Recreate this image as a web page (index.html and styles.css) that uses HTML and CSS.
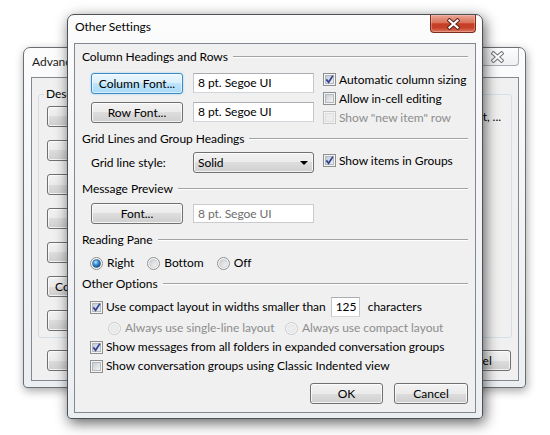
FILE: index.html
```html
<!DOCTYPE html>
<html lang="en">
<head>
<meta charset="utf-8">
<title>Other Settings</title>
<link rel="stylesheet" href="styles.css">
</head>
<body>
<svg class="defs" width="0" height="0" aria-hidden="true">
  <defs>
    <linearGradient id="cbFill" x1="0" y1="0" x2="1" y2="1">
      <stop offset="0" stop-color="#c6cad0"/>
      <stop offset="1" stop-color="#f6f6f6"/>
    </linearGradient>
    <linearGradient id="cbFillOn" x1="0" y1="0" x2="1" y2="1">
      <stop offset="0" stop-color="#c2cad6"/>
      <stop offset="1" stop-color="#eef1f6"/>
    </linearGradient>
    <linearGradient id="rdFill" x1="0" y1="0" x2="1" y2="1">
      <stop offset="0" stop-color="#c9ccd1"/>
      <stop offset="1" stop-color="#f7f7f7"/>
    </linearGradient>
    <radialGradient id="rdDot" cx="0.4" cy="0.35" r="0.7">
      <stop offset="0" stop-color="#b6e6ff"/>
      <stop offset="0.45" stop-color="#3a92d4"/>
      <stop offset="1" stop-color="#0e3f74"/>
    </radialGradient>
  </defs>
</svg>

<main class="desktop">

  <section class="win back">
    <header class="titlebar back-titlebar">
      <span class="title">Advanced View Settings</span>
      <span class="close close-inactive">
        <svg width="13" height="12" viewBox="0 0 13 12">
          <path d="M2.5 2.5L10.5 9.5M10.5 2.5L2.5 9.5" stroke="#6f7378" stroke-width="4.2" stroke-linecap="square"/>
          <path d="M2.5 2.5L10.5 9.5M10.5 2.5L2.5 9.5" stroke="#ffffff" stroke-width="2.2" stroke-linecap="square"/>
        </svg>
      </span>
    </header>
    <div class="client back-client">
      <fieldset class="groupbox">
        <legend>Description</legend>
        <div class="gb-row"><button class="btn gb-btn" aria-label="Columns..."></button><span class="gb-desc gb-desc-long">Sent, ...</span></div>
        <div class="gb-row"><button class="btn gb-btn" aria-label="Group By..."></button></div>
        <div class="gb-row"><button class="btn gb-btn" aria-label="Sort..."></button></div>
        <div class="gb-row"><button class="btn gb-btn" aria-label="Filter..."></button></div>
        <div class="gb-row"><button class="btn gb-btn" aria-label="Other Settings..."></button></div>
        <div class="gb-row"><button class="btn gb-btn gb-btn-text">Conditional Formatting...</button></div>
        <div class="gb-row"><button class="btn gb-btn" aria-label="Format Columns..."></button></div>
      </fieldset>
      <div class="back-footer">
        <button class="btn gb-btn" aria-label="Reset Current View"></button>
        <span class="spacer"></span>
        <button class="btn back-ok" aria-label="OK"></button>
        <button class="btn back-cancel">Cancel</button>
      </div>
    </div>
  </section>

  <section class="win front">
    <header class="titlebar front-titlebar">
      <span class="title">Other Settings</span>
      <span class="close close-active">
        <svg width="13" height="12" viewBox="0 0 13 12">
          <path d="M2.5 2.5L10.5 9.5M10.5 2.5L2.5 9.5" stroke="#5b2418" stroke-width="4.2" stroke-linecap="square"/>
          <path d="M2.5 2.5L10.5 9.5M10.5 2.5L2.5 9.5" stroke="#ffffff" stroke-width="2.2" stroke-linecap="square"/>
        </svg>
      </span>
    </header>

    <div class="client front-client">

      <div class="sec sec1">
        <div class="sec-head"><span>Column Headings and Rows</span></div>
        <div class="sec-body body1">
          <div class="col-btns">
            <button class="btn btn-focus fbtn">Column Font...</button>
            <button class="btn fbtn">Row Font...</button>
          </div>
          <div class="col-fields">
            <span class="tb">8 pt. Segoe UI</span>
            <span class="tb">8 pt. Segoe UI</span>
          </div>
          <div class="col-checks">
            <label class="chk">
              <svg class="box" width="13" height="13" viewBox="0 0 13 13"><rect x="0.5" y="0.5" width="12" height="12" fill="#f4f4f4" stroke="#8e8f8f"/><rect x="2.5" y="2.5" width="8" height="8" fill="url(#cbFillOn)" stroke="#b4b9c0"/><path d="M3.3 6.4L5.6 9.2L9.9 2.6" fill="none" stroke="#2f4190" stroke-width="1.7"/></svg>
              <span>Automatic column sizing</span>
            </label>
            <label class="chk">
              <svg class="box" width="13" height="13" viewBox="0 0 13 13"><rect x="0.5" y="0.5" width="12" height="12" fill="#f4f4f4" stroke="#8e8f8f"/><rect x="2.5" y="2.5" width="8" height="8" fill="url(#cbFill)" stroke="#b4b9c0"/></svg>
              <span>Allow in-cell editing</span>
            </label>
            <label class="chk is-disabled">
              <svg class="box" width="13" height="13" viewBox="0 0 13 13"><rect x="0.5" y="0.5" width="12" height="12" fill="#f4f4f4" stroke="#c7c7c7"/><rect x="2.5" y="2.5" width="8" height="8" fill="#ececec" stroke="#dedede"/></svg>
              <span>Show "new item" row</span>
            </label>
          </div>
        </div>
      </div>

      <div class="sec sec2">
        <div class="sec-head"><span>Grid Lines and Group Headings</span></div>
        <div class="sec-body body2">
          <span class="field-label">Grid line style:</span>
          <span class="sel"><span>Solid</span><svg width="8" height="4" viewBox="0 0 8 4"><path d="M0 0H8L4 4Z" fill="#000"/></svg></span>
          <label class="chk chk-groups">
            <svg class="box" width="13" height="13" viewBox="0 0 13 13"><rect x="0.5" y="0.5" width="12" height="12" fill="#f4f4f4" stroke="#8e8f8f"/><rect x="2.5" y="2.5" width="8" height="8" fill="url(#cbFillOn)" stroke="#b4b9c0"/><path d="M3.3 6.4L5.6 9.2L9.9 2.6" fill="none" stroke="#2f4190" stroke-width="1.7"/></svg>
            <span>Show items in Groups</span>
          </label>
        </div>
      </div>

      <div class="sec sec3">
        <div class="sec-head"><span>Message Preview</span></div>
        <div class="sec-body body3">
          <button class="btn fbtn">Font...</button>
          <span class="tb tb-disabled">8 pt. Segoe UI</span>
        </div>
      </div>

      <div class="sec sec4">
        <div class="sec-head"><span>Reading Pane</span></div>
        <div class="sec-body body4">
          <label class="rad">
            <svg class="dot" width="13" height="13" viewBox="0 0 13 13"><circle cx="6.5" cy="6.5" r="6" fill="#f6f6f6" stroke="#8e8f8f"/><circle cx="6.5" cy="6.5" r="4" fill="url(#rdDot)" stroke="#2b5f91" stroke-width="0.6"/></svg>
            <span>Right</span>
          </label>
          <label class="rad">
            <svg class="dot" width="13" height="13" viewBox="0 0 13 13"><circle cx="6.5" cy="6.5" r="6" fill="#f6f6f6" stroke="#8e8f8f"/><circle cx="6.5" cy="6.5" r="4" fill="url(#rdFill)" stroke="#c0c3c8" stroke-width="0.6"/></svg>
            <span>Bottom</span>
          </label>
          <label class="rad">
            <svg class="dot" width="13" height="13" viewBox="0 0 13 13"><circle cx="6.5" cy="6.5" r="6" fill="#f6f6f6" stroke="#8e8f8f"/><circle cx="6.5" cy="6.5" r="4" fill="url(#rdFill)" stroke="#c0c3c8" stroke-width="0.6"/></svg>
            <span>Off</span>
          </label>
        </div>
      </div>

      <div class="sec sec5">
        <div class="sec-head"><span>Other Options</span></div>
        <div class="sec-body body5">
          <div class="opt-row compact-row">
            <label class="chk">
              <svg class="box" width="13" height="13" viewBox="0 0 13 13"><rect x="0.5" y="0.5" width="12" height="12" fill="#f4f4f4" stroke="#8e8f8f"/><rect x="2.5" y="2.5" width="8" height="8" fill="url(#cbFillOn)" stroke="#b4b9c0"/><path d="M3.3 6.4L5.6 9.2L9.9 2.6" fill="none" stroke="#2f4190" stroke-width="1.7"/></svg>
              <span>Use compact layout in widths smaller than</span>
            </label>
            <span class="tb tb-num">125</span>
            <span class="unit">characters</span>
          </div>
          <div class="opt-row sub-row">
            <label class="rad is-disabled">
              <svg class="dot" width="13" height="13" viewBox="0 0 13 13"><circle cx="6.5" cy="6.5" r="6" fill="#f7f7f7" stroke="#c9c9c9"/><circle cx="6.5" cy="6.5" r="4" fill="#ececec" stroke="#dcdcdc" stroke-width="0.6"/></svg>
              <span>Always use single-line layout</span>
            </label>
            <label class="rad is-disabled">
              <svg class="dot" width="13" height="13" viewBox="0 0 13 13"><circle cx="6.5" cy="6.5" r="6" fill="#f7f7f7" stroke="#c9c9c9"/><circle cx="6.5" cy="6.5" r="4" fill="#ececec" stroke="#dcdcdc" stroke-width="0.6"/></svg>
              <span>Always use compact layout</span>
            </label>
          </div>
          <div class="opt-row">
            <label class="chk">
              <svg class="box" width="13" height="13" viewBox="0 0 13 13"><rect x="0.5" y="0.5" width="12" height="12" fill="#f4f4f4" stroke="#8e8f8f"/><rect x="2.5" y="2.5" width="8" height="8" fill="url(#cbFillOn)" stroke="#b4b9c0"/><path d="M3.3 6.4L5.6 9.2L9.9 2.6" fill="none" stroke="#2f4190" stroke-width="1.7"/></svg>
              <span>Show messages from all folders in expanded conversation groups</span>
            </label>
          </div>
          <div class="opt-row">
            <label class="chk">
              <svg class="box" width="13" height="13" viewBox="0 0 13 13"><rect x="0.5" y="0.5" width="12" height="12" fill="#f4f4f4" stroke="#8e8f8f"/><rect x="2.5" y="2.5" width="8" height="8" fill="url(#cbFill)" stroke="#b4b9c0"/></svg>
              <span>Show conversation groups using Classic Indented view</span>
            </label>
          </div>
        </div>
      </div>

      <div class="footer">
        <button class="btn ok-btn">OK</button>
        <button class="btn cancel-btn">Cancel</button>
      </div>
    </div>
  </section>

</main>
</body>
</html>
```

FILE: styles.css
```css
* { box-sizing: border-box; }
html, body { margin: 0; padding: 0; }
body {
  width: 550px;
  height: 435px;
  overflow: hidden;
  background: #ffffff;
  color: #000;
  font-family: Lato, "Noto Sans", "DejaVu Sans", sans-serif;
  font-size: 12px;
  line-height: 16px;
  letter-spacing: -0.04px;
}
.defs { position: absolute; width: 0; height: 0; }
.desktop { position: relative; width: 550px; height: 435px; }

/* ---------- windows ---------- */
.win {
  position: absolute;
  display: flex;
  flex-direction: column;
  border: 1px solid #4d5054;
  border-radius: 7px 7px 4px 4px;
  background: linear-gradient(#fcfcfd, #f1f3f5 50%, #eceff2);
}
.back {
  left: 23px;
  top: 47px;
  width: 503px;
  height: 341px;
  border-color: #6b6e72;
  box-shadow: 1px 3px 10px rgba(0, 0, 0, 0.35);
}
.front {
  left: 67px;
  top: 14px;
  width: 416px;
  height: 405px;
  box-shadow: 2px 4px 14px rgba(0, 0, 0, 0.62);
}

.titlebar {
  display: flex;
  align-items: flex-start;
  flex: none;
  padding-left: 7px;
}
.front-titlebar { height: 28px; }
.back-titlebar { height: 29px; padding-left: 8px; }
.front-titlebar .title { padding-top: 4px; }
.back-titlebar .title { padding-top: 6px; color: #1c1c1c; white-space: nowrap; }

.close {
  margin-left: auto;
  display: flex;
  align-items: center;
  justify-content: center;
  border-radius: 0 0 4px 4px;
}
.close-active {
  width: 46px;
  height: 18px;
  margin-right: 6px;
  border: 1px solid #7a2c1f;
  border-top: none;
  background: linear-gradient(#eba595 0%, #d9735c 45%, #c53f24 52%, #c6412a 75%, #dd7a5f 100%);
  box-shadow: inset 0 0 0 1px rgba(255, 215, 205, 0.35);
}
.close-inactive {
  width: 43px;
  height: 18px;
  margin-right: 6px;
  border: 1px solid #a9adb3;
  border-top: none;
  background: linear-gradient(#fdfdfd, #eef0f2);
}

.client {
  flex: 1;
  background: #f0f0f0;
  border: 1px solid #828790;
}
.front .client { margin: 0 6px 5px 6px; }
.back .client { margin: 0 6px 6px 7px; }

/* ---------- buttons & fields ---------- */
.btn {
  appearance: none;
  -webkit-appearance: none;
  margin: 0;
  padding: 0;
  height: 21px;
  font: inherit;
  line-height: 19px;
  color: #000;
  text-align: center;
  white-space: nowrap;
  overflow: hidden;
  border: 1px solid #707070;
  border-radius: 3px;
  background: linear-gradient(#f2f2f2 0%, #ebebeb 50%, #dddddd 50%, #cfcfcf 100%);
  box-shadow: inset 0 0 0 1px rgba(255, 255, 255, 0.75);
}
.btn-focus {
  border-color: #3c8ac4;
  background: linear-gradient(#eaf6fd 0%, #d9f0fc 50%, #bee6fd 50%, #a7d9f5 100%);
  box-shadow: inset 0 0 0 1px rgba(255, 255, 255, 0.55), 0 0 2px rgba(80, 180, 240, 0.6);
}
.fbtn { width: 92px; flex: none; }

.tb {
  display: block;
  width: 121px;
  height: 20px;
  padding: 0 4px;
  line-height: 18px;
  background: #fff;
  border: 1px solid #abadb3;
  border-left-color: #c3c6cc;
  border-right-color: #c3c6cc;
  border-bottom-color: #d2d5da;
  white-space: nowrap;
  overflow: hidden;
}
.tb-disabled {
  color: #6d6d6d;
  border-color: #c9cbcf;
  height: 19px;
  margin-top: 1px;
  margin-left: 10px;
}
.tb-num {
  width: 29px;
  margin-left: 5px;
  flex: none;
}

.sel {
  display: flex;
  align-items: center;
  justify-content: space-between;
  width: 121px;
  height: 21px;
  padding: 0 5px 0 4px;
  border: 1px solid #707070;
  border-radius: 3px;
  background: linear-gradient(#f2f2f2 0%, #ebebeb 50%, #dddddd 50%, #cfcfcf 100%);
  box-shadow: inset 0 0 0 1px rgba(255, 255, 255, 0.75);
}

.chk, .rad {
  display: flex;
  align-items: center;
  gap: 3px;
  white-space: nowrap;
}
.chk { height: 13px; }
.box, .dot { flex: none; display: block; }
.rad { gap: 4px; }
.is-disabled { color: #8d8d8d; }

/* ---------- front dialog sections ---------- */
.front-client {
  display: flex;
  flex-direction: column;
  padding: 0 7px;
}
.sec-head {
  display: flex;
  align-items: center;
  height: 16px;
  white-space: nowrap;
}
.sec-head::after {
  content: "";
  flex: 1;
  margin-left: 5px;
  border-top: 1px solid #a3a3a3;
  border-bottom: 1px solid #ffffff;
}
.sec1 { margin-top: 5px; }
.sec2 { margin-top: 7px; }
.sec3 { margin-top: 8px; }
.sec4 { margin-top: 8px; }
.sec5 { margin-top: 4px; }

.sec-body { display: flex; padding-left: 9px; }
.body1 { padding-top: 8px; align-items: flex-start; }
.body2 { padding-top: 5px; align-items: center; }
.body3 { padding-top: 6px; align-items: flex-start; }
.body4 { padding-top: 6px; padding-left: 8px; height: 24px; align-items: center; gap: 13px; }
.body5 { padding-top: 5px; padding-left: 8px; flex-direction: column; }

.col-btns { display: flex; flex-direction: column; gap: 8px; }
.col-fields { display: flex; flex-direction: column; gap: 9px; margin-left: 10px; }
.col-checks { display: flex; flex-direction: column; gap: 6px; margin-left: 9px; }

.field-label { width: 102px; flex: none; }
.chk-groups { margin-left: 9px; align-self: flex-start; margin-top: 2px; }

.opt-row { display: flex; align-items: center; height: 16px; margin-top: 3px; }
.compact-row { height: 20px; margin-top: 0; }
.unit { margin-left: 8px; }
.sub-row {
  display: grid;
  grid-template-columns: 177px auto;
  padding-left: 18px;
  align-items: center;
}
.sub-row .rad { height: 16px; }

.footer {
  display: flex;
  justify-content: flex-end;
  gap: 11px;
  margin-top: 9px;
}
.ok-btn { width: 73px; }
.cancel-btn { width: 74px; }

/* ---------- back dialog ---------- */
.back-client {
  display: flex;
  flex-direction: column;
}
.groupbox {
  margin: 8px 6px 0 6px;
  padding: 4px 0 6px 8px;
  border: 1px solid #d5dfe5;
  border-radius: 3px;
  display: flex;
  flex-direction: column;
  gap: 13px;
  min-width: 0;
}
.groupbox legend {
  padding: 0 2px;
  margin-left: -3px;
  line-height: 16px;
}
.gb-row { display: flex; align-items: center; gap: 12px; height: 21px; }
.gb-btn { width: 150px; flex: none; }
.gb-btn-text { text-align: left; padding-left: 7px; }
.gb-desc { flex: 1; white-space: nowrap; overflow: hidden; }
.gb-desc-long { text-align: right; padding-right: 10px; }
.back-footer {
  display: flex;
  gap: 11px;
  margin-top: 12px;
  padding: 0 7px 0 15px;
}
.spacer { flex: 1; }
.back-ok { width: 73px; }
.back-cancel { width: 74px; }
```
